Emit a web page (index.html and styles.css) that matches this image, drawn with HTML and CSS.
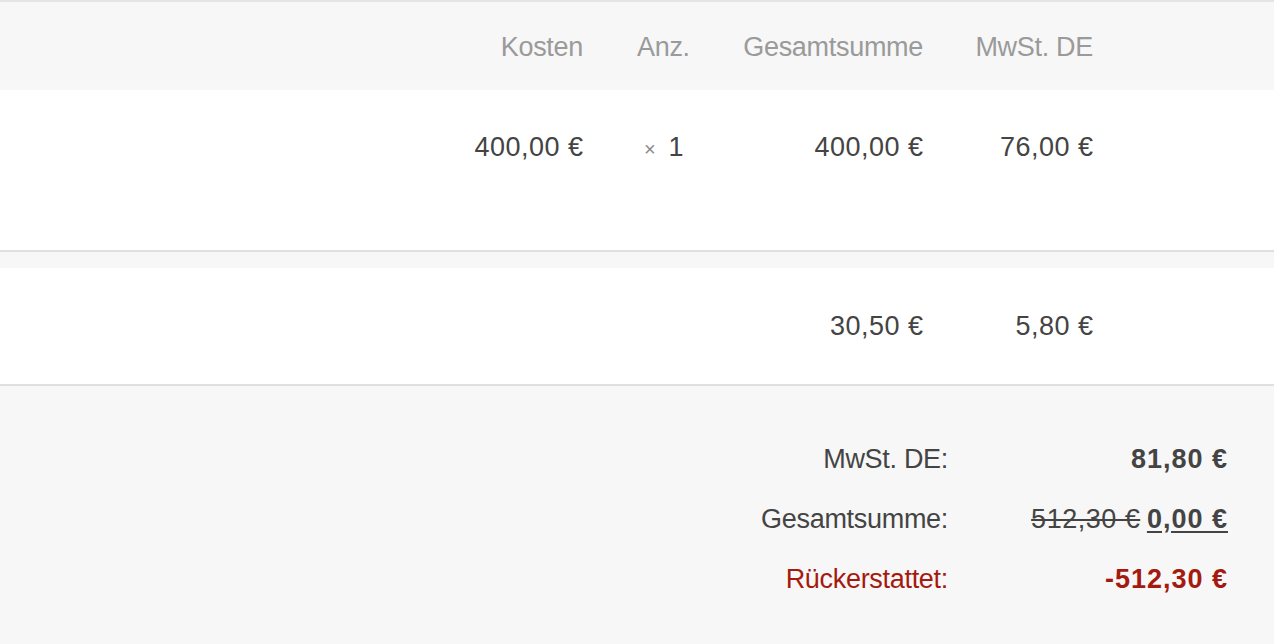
FILE: index.html
```html
<!DOCTYPE html>
<html lang="de">
<head>
<meta charset="utf-8">
<link rel="stylesheet" href="styles.css">
</head>
<body>
<div class="table">
  <div class="row head">
    <div class="cell name"></div>
    <div class="cell num">Kosten</div>
    <div class="cell qty">Anz.</div>
    <div class="cell num">Gesamtsumme</div>
    <div class="cell num">MwSt. DE</div>
    <div class="cell end"></div>
  </div>
  <div class="row item">
    <div class="cell name"></div>
    <div class="cell num"><span class="amount">400,00 €</span></div>
    <div class="cell qty"><span class="times">×</span> 1</div>
    <div class="cell num"><span class="amount">400,00 €</span></div>
    <div class="cell num"><span class="amount">76,00 €</span></div>
    <div class="cell end"></div>
  </div>
  <div class="spacer"></div>
  <div class="row shipping">
    <div class="cell name"></div>
    <div class="cell num"></div>
    <div class="cell qty"></div>
    <div class="cell num"><span class="amount">30,50 €</span></div>
    <div class="cell num"><span class="amount">5,80 €</span></div>
    <div class="cell end"></div>
  </div>
</div>
<div class="totals">
  <div class="total-row">
    <div class="label">MwSt. DE:</div>
    <div class="value"><span class="amount strong">81,80 €</span></div>
  </div>
  <div class="total-row">
    <div class="label">Gesamtsumme:</div>
    <div class="value"><del class="amount old">512,30 €</del> <span class="amount strong new">0,00 €</span></div>
  </div>
  <div class="total-row refund">
    <div class="label">Rückerstattet:</div>
    <div class="value"><span class="amount strong">-512,30 €</span></div>
  </div>
</div>
</body>
</html>
```
FILE: styles.css
```css
html, body {
  margin: 0;
  padding: 0;
  background: #f7f7f7;
  font-family: "Liberation Sans", Arial, sans-serif;
  font-size: 27px;
  letter-spacing: -0.3px;
  color: #444;
  height: 644px;
  overflow: hidden;
}

.table {
  border-top: 2px solid #e4e4e4;
}

.row {
  display: grid;
  grid-template-columns: 1fr 120px 106px 234px 170px 181px;
  align-items: start;
}

.cell {
  white-space: nowrap;
}

.num {
  text-align: right;
}

.qty {
  text-align: left;
  padding-left: 54px;
}

.amount {
  letter-spacing: 0.5px;
  margin-right: -0.5px;
}

.amount.strong {
  letter-spacing: 1px;
  margin-right: -1px;
}

.head {
  background: #f7f7f7;
  height: 88px;
  box-sizing: border-box;
  padding-top: 2px;
  align-items: center;
  color: #9a9a9a;
}

.item {
  background: #fff;
  height: 162px;
  box-sizing: border-box;
  padding-top: 42px;
  border-bottom: 2px solid #e0e0e0;
}

.item .qty {
  padding-left: 61px;
}

.times {
  color: #8a8a8a;
  font-size: 20px;
  margin-right: 6px;
}

.spacer {
  height: 16px;
  background: #f7f7f7;
}

.shipping {
  background: #fff;
  height: 118px;
  box-sizing: border-box;
  padding-top: 43px;
  border-bottom: 2px solid #e0e0e0;
}

.totals {
  background: #f7f7f7;
  padding-top: 43px;
  padding-right: 47px;
  display: flex;
  flex-direction: column;
}

.total-row {
  display: grid;
  grid-template-columns: 1fr 279px;
  height: 60px;
  align-items: center;
}

.label {
  text-align: right;
}

.value {
  text-align: right;
}

.strong {
  font-weight: bold;
}

.old {
  text-decoration: line-through;
}

.new {
  text-decoration: underline;
  text-underline-offset: 3px;
}

.refund {
  color: #a41a0f;
}
```
